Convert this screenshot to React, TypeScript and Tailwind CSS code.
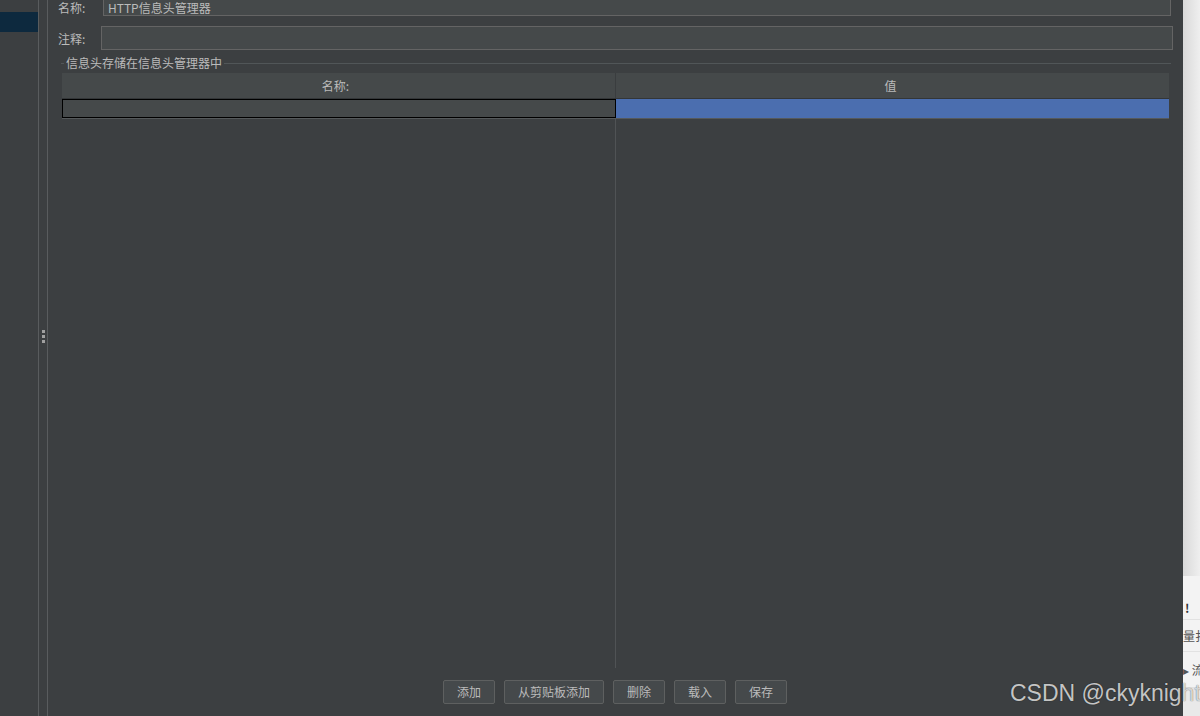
import React from "react";

const font = "font-['Noto_Sans_CJK_SC','Noto_Sans',sans-serif]";

function Btn({ label, w }: { label: string; w: string }) {
  return (
    <div
      className={`${w} h-[24px] flex items-center justify-center rounded-[2px] border border-[#5e6060] bg-[#45494b] text-[12px] text-[#bbbbbb]`}
    >
      {label}
    </div>
  );
}

export default function App() {
  return (
    <div className={`relative w-[1200px] h-[716px] flex bg-[#3c3f41] overflow-hidden ${font}`}>
      {/* left tree sidebar */}
      <div className="w-[38px] h-full pt-[12px]">
        <div className="h-[20px] bg-[#0d293e]" />
      </div>
      <div className="w-[1px] h-full bg-[#595c5e]" />
      <div className="w-[8px] h-full flex flex-col items-center pt-[330px] gap-[2px]">
        <div className="w-[3px] h-[3px] bg-[#a0a0a0]" />
        <div className="w-[3px] h-[3px] bg-[#a0a0a0]" />
        <div className="w-[3px] h-[3px] bg-[#a0a0a0]" />
      </div>
      <div className="w-[1px] h-full bg-[#595c5e]" />

      {/* main panel */}
      <div className="w-[1135px] h-full flex flex-col">
        {/* name row (top cut by the window edge) */}
        <div className="h-[16px] flex items-center">
          <div className="w-[55px] pl-[10px] text-[12px] leading-[14px] text-[#bbbbbb]">名称:</div>
          <div className="w-[1068px] h-[16px] border border-t-0 border-[#646464] bg-[#45494a] flex items-center pl-[4px] text-[12px] leading-[14px] text-[#bbbbbb]">
            HTTP信息头管理器
          </div>
        </div>
        {/* comment row */}
        <div className="mt-[10px] h-[24px] flex items-center">
          <div className="w-[53px] pl-[10px] pt-[2px] text-[12px] text-[#bbbbbb]">注释:</div>
          <div className="w-[1072px] h-[24px] border border-[#646464] bg-[#45494a]" />
        </div>
        {/* group title */}
        <div className="mt-[6px] h-[14px] flex items-center pl-[13px] pr-[12px]">
          <div className="w-[3px] h-[1px] bg-[#515658]" />
          <div className="px-[2px] text-[12px] leading-[14px] text-[#bbbbbb]">信息头存储在信息头管理器中</div>
          <div className="flex-1 h-[1px] bg-[#515658]" />
        </div>
        {/* table */}
        <div className="mt-[3px] ml-[14px] w-[1107px] flex-1 flex flex-col">
          <div className="h-[26px] flex bg-[#45494a] border-b border-[#333638]">
            <div className="w-[553px] flex items-center justify-center pt-[1px] pr-[6px] text-[12px] text-[#bbbbbb]">名称:</div>
            <div className="w-[1px] bg-[#3a3d3f]" />
            <div className="flex-1 flex items-center justify-center pt-[1px] pr-[4px] text-[12px] text-[#bbbbbb]">值</div>
          </div>
          <div className="h-[20px] flex border-b border-[#55595b]">
            <div className="w-[554px] h-[19px] border border-black bg-[#45494a]" />
            <div className="flex-1 h-[19px] bg-[#4b6eaf]" />
          </div>
          <div className="flex-1 flex">
            <div className="w-[553px]" />
            <div className="w-[1px] bg-[#505355]" />
            <div className="flex-1" />
          </div>
        </div>
        {/* buttons */}
        <div className="mt-[12px] mb-[12px] h-[24px] flex justify-center gap-[9px] pr-[1px]">
          <Btn label="添加" w="w-[52px]" />
          <Btn label="从剪贴板添加" w="w-[100px]" />
          <Btn label="删除" w="w-[52px]" />
          <Btn label="载入" w="w-[52px]" />
          <Btn label="保存" w="w-[52px]" />
        </div>
      </div>

      {/* right strip (another window behind) */}
      <div className="w-[17px] h-full flex flex-col overflow-hidden">
        <div className="flex-1 bg-gradient-to-r from-[#d9d9d9] to-[#efefef]" />
        <div className="h-[140px] bg-[#f3f3f3] flex flex-col text-[12px] text-[#555555] overflow-hidden whitespace-nowrap">
          <div className="h-[44px] flex items-end pl-[2px] pb-[2px] border-b border-[#e2e2e2] font-bold text-[#333333]">!</div>
          <div className="h-[32px] flex items-center border-b border-[#e2e2e2]">量扌</div>
          <div className="h-[36px] flex items-center border-b border-[#e2e2e2]">▸ 流</div>
          <div className="flex-1 bg-[#e9e9e9]" />
        </div>
      </div>

      {/* watermark */}
      <div className="absolute left-[1010px] top-[679px] whitespace-nowrap text-[23px] leading-[28px] text-white/75 font-['Liberation_Sans',Arial,sans-serif] [text-shadow:0_0_1px_rgba(0,0,0,0.7)]">
        CSDN @ckyknight
      </div>
    </div>
  );
}
